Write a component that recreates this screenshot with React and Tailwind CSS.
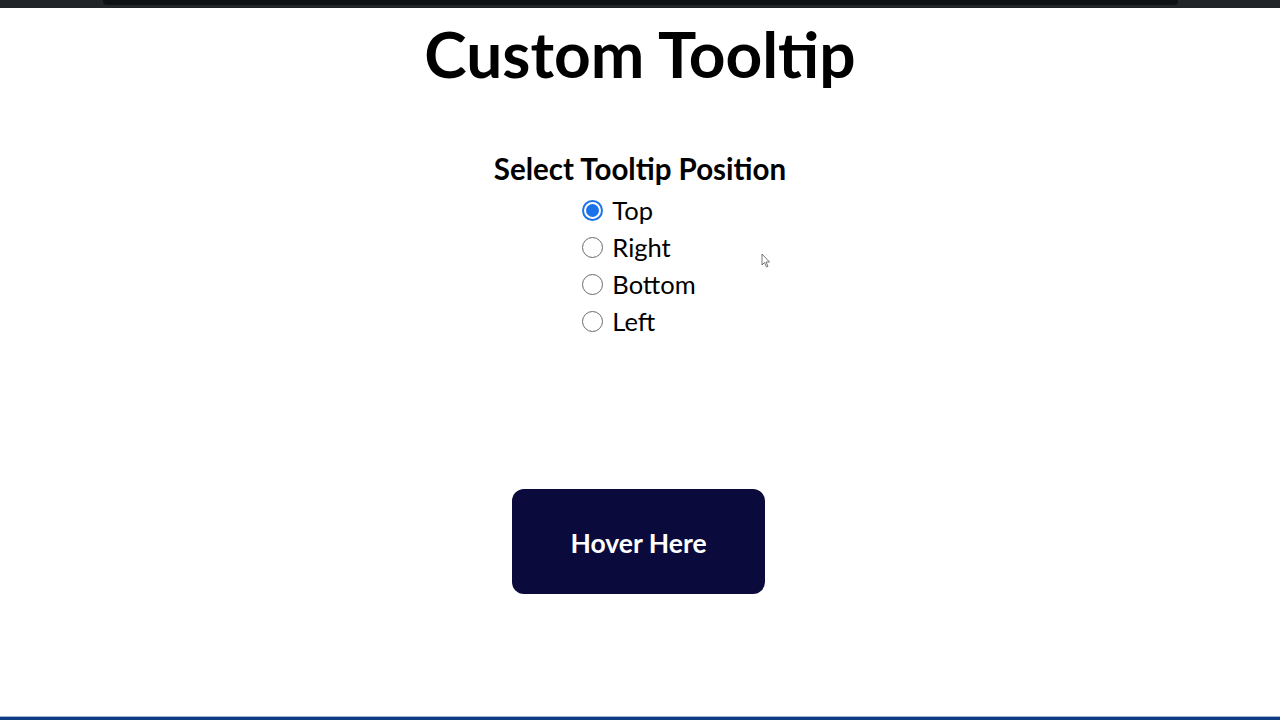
import React, { useState } from "react";

const font = { fontFamily: 'Lato, "Open Sans", sans-serif' };

function Radio({ checked }) {
  return checked ? (
    <span className="flex h-[21px] w-[21px] items-center justify-center rounded-full border-2 border-[#1a73e8] bg-white">
      <span className="h-[13px] w-[13px] rounded-full bg-[#1a73e8]" />
    </span>
  ) : (
    <span className="h-[21px] w-[21px] rounded-full border border-[#6b6b6b] bg-white" />
  );
}

export default function App() {
  const [pos, setPos] = useState("Top");
  const opts = ["Top", "Right", "Bottom", "Left"];
  return (
    <div className="flex h-[720px] w-[1280px] flex-col bg-white" style={font}>
      <div className="flex h-[8px] justify-center bg-[#222528]">
        <div className="h-[5px] w-[1075px] rounded-b bg-[#0e1113]" />
      </div>
      <div className="relative flex flex-1 flex-col items-center">
        <h1 className="mt-[5px] text-[64px] font-bold leading-[82px] text-black">Custom Tooltip</h1>
        <h2 className="mt-[56px] text-[29.5px] font-bold leading-[36px] text-black">Select Tooltip Position</h2>
        <div className="mt-[9px] flex flex-col gap-[9px] pr-[2px]">
          {opts.map((o) => (
            <label key={o} className="flex h-[28px] cursor-pointer items-center gap-[9px]" onClick={() => setPos(o)}>
              <Radio checked={pos === o} />
              <span className="text-[25.5px] leading-[28px] text-black">{o}</span>
            </label>
          ))}
        </div>
        <button className="mr-[3px] mt-[154px] flex h-[105px] w-[253px] items-center justify-center rounded-[12px] bg-[#0b0a3d] pt-[5px] text-[26.5px] font-bold text-white">
          Hover Here
        </button>
        <svg className="absolute left-[761px] top-[245px]" width="10" height="15" viewBox="0 0 10 15">
          <path d="M1 1 L1 12 L3.5 9.5 L5.5 14 L7 13.3 L5 9 L8.5 9 Z" fill="white" stroke="#555" strokeWidth="0.8" />
        </svg>
      </div>
      <div className="h-[1px] bg-[#9fb7d6]" />
      <div className="h-[3px] bg-[#0d3a80]" />
    </div>
  );
}
